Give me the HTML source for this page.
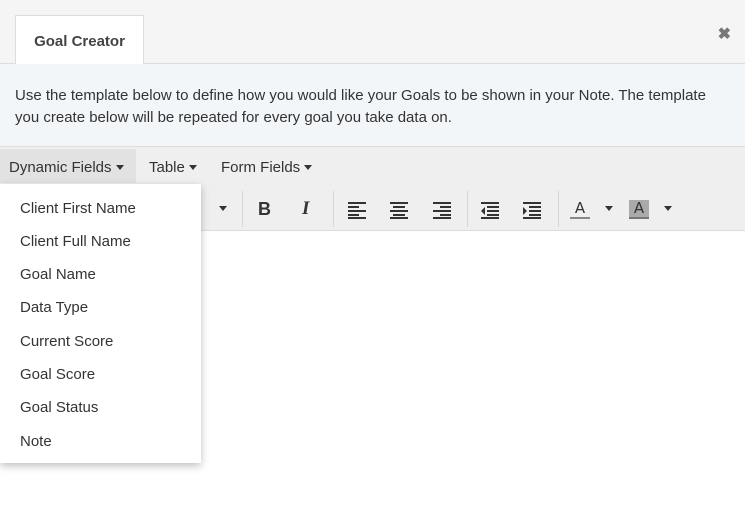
<!DOCTYPE html>
<html><head><meta charset="utf-8"><style>
*{margin:0;padding:0;box-sizing:border-box}
body{width:745px;height:505px;overflow:hidden;background:#fff;font-family:"Liberation Sans",Arial,sans-serif;color:#333;position:relative}
.hdr{position:absolute;left:0;top:0;width:745px;height:64px;background:#f5f5f5;border-bottom:1px solid #ddd}
.tab{position:absolute;left:15px;top:15px;width:129px;height:50px;background:#fff;border:1px solid #ddd;border-bottom:none;font-weight:bold;font-size:15px;line-height:52px;text-align:center;color:#444}
.x{position:absolute;right:14px;top:24px;font-size:16px;font-weight:bold;color:#777}
.info{position:absolute;left:0;top:64px;width:745px;height:83px;background:#f3f6f9;border-bottom:1px solid #ddd;font-size:15px;line-height:22px;padding:21px 15px 0}
.tb{position:absolute;left:0;top:147px;width:745px;height:84px;background:#efefef;border-bottom:1px solid #ddd}
.m{position:absolute;top:2px;height:34px;line-height:38px;font-size:15px;padding:0 9px}
.car{display:inline-block;width:0;height:0;border-left:4px solid transparent;border-right:4px solid transparent;border-top:5px solid #333;vertical-align:middle;margin-left:4px;margin-top:-2px}
.sep{position:absolute;top:44px;width:1px;height:36px;background:#d6d6d6}
.dd{position:absolute;left:0;top:184px;width:201px;height:279px;background:#fff;box-shadow:0 3px 8px rgba(0,0,0,.25)}
.dd div{position:absolute;left:20px;font-size:15px}
</style></head><body>
<div class="hdr"><div class="tab">Goal Creator</div><div class="x">✖</div></div>
<div class="info">Use the template below to define how you would like your Goals to be shown in your Note. The template you create below will be repeated for every goal you take data on.</div>
<div class="tb">
<div class="m" style="left:0;width:136px;background:#e2e2e2">Dynamic Fields<span class="car"></span></div>
<div class="m" style="left:140px">Table<span class="car"></span></div>
<div class="m" style="left:212px">Form Fields<span class="car"></span></div>
<span class="car" style="position:absolute;left:215px;top:61px"></span>
<div class="sep" style="left:242px"></div>
<div style="position:absolute;left:258px;top:52px;font-weight:bold;font-size:18px;font-family:'Liberation Sans',sans-serif">B</div>
<div style="position:absolute;left:302px;top:51px;font-style:italic;font-weight:bold;font-size:19px;font-family:'Liberation Serif',serif">I</div>
<div class="sep" style="left:333px"></div>
<svg style="position:absolute;left:346px;top:54px" width="110" height="18" fill="#333">
<rect x="2" y="1" width="18" height="2"/><rect x="2" y="5" width="11" height="2"/><rect x="2" y="9" width="18" height="2"/><rect x="2" y="13" width="11" height="2"/><rect x="2" y="16" width="18" height="2"/>
<rect x="44" y="1" width="18" height="2"/><rect x="47" y="5" width="12" height="2"/><rect x="44" y="9" width="18" height="2"/><rect x="47" y="13" width="12" height="2"/><rect x="44" y="16" width="18" height="2"/>
<rect x="87" y="1" width="18" height="2"/><rect x="94" y="5" width="11" height="2"/><rect x="87" y="9" width="18" height="2"/><rect x="94" y="13" width="11" height="2"/><rect x="87" y="16" width="18" height="2"/>
</svg>
<div class="sep" style="left:467px"></div>
<svg style="position:absolute;left:480px;top:54px" width="70" height="18" fill="#333">
<rect x="1" y="1" width="18" height="2"/><rect x="7" y="5" width="12" height="2"/><rect x="7" y="9" width="12" height="2"/><rect x="7" y="13" width="12" height="2"/><rect x="1" y="16" width="18" height="2"/><path d="M5 6 L1 10 L5 14Z"/>
<rect x="43" y="1" width="18" height="2"/><rect x="49" y="5" width="12" height="2"/><rect x="49" y="9" width="12" height="2"/><rect x="49" y="13" width="12" height="2"/><rect x="43" y="16" width="18" height="2"/><path d="M43 6 L47 10 L43 14Z"/>
</svg>
<div class="sep" style="left:558px"></div>
<div style="position:absolute;left:570px;top:53px;font-size:15px;font-family:'DejaVu Sans',sans-serif;width:20px;text-align:center;border-bottom:2px solid #888;line-height:17px">A</div>
<span class="car" style="position:absolute;left:601px;top:61px"></span>
<div style="position:absolute;left:629px;top:53px;font-size:15px;font-family:'DejaVu Sans',sans-serif;width:20px;text-align:center;background:#aaa;border-bottom:2px solid #777;line-height:17px">A</div>
<span class="car" style="position:absolute;left:660px;top:61px"></span>
</div>
<div class="dd">
<div style="top:16px">Client First Name</div>
<div style="top:49px">Client Full Name</div>
<div style="top:82px">Goal Name</div>
<div style="top:115px">Data Type</div>
<div style="top:149px">Current Score</div>
<div style="top:182px">Goal Score</div>
<div style="top:215px">Goal Status</div>
<div style="top:249px">Note</div>
</div>
</body></html>
